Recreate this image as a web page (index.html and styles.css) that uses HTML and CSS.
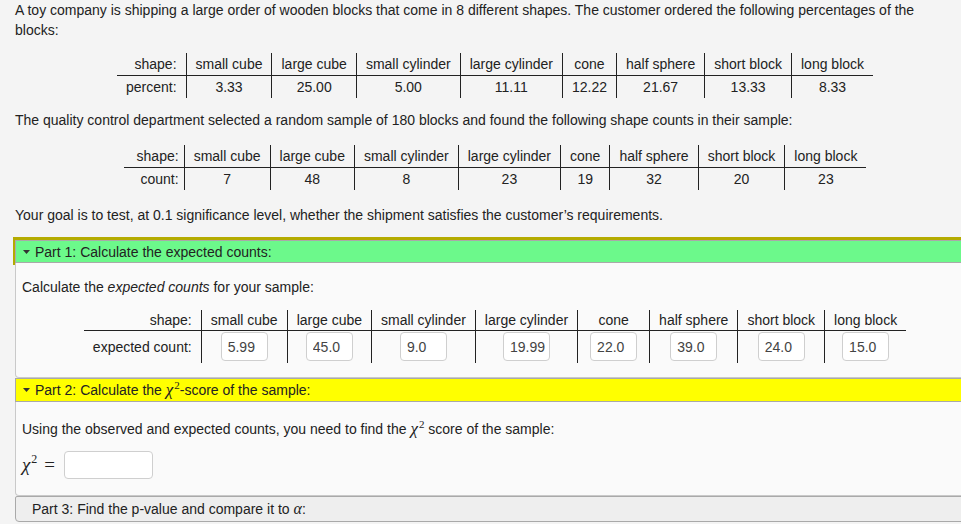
FILE: index.html
```html
<!DOCTYPE html>
<html lang="en">
<head>
<meta charset="utf-8">
<title>Goodness of fit</title>
<link rel="stylesheet" href="styles.css">
</head>
<body>
<div class="page">
  <p class="text intro">A toy company is shipping a large order of wooden blocks that come in 8 different shapes. The customer ordered the following percentages of the blocks:</p>

  <table class="data t1">
    <tr class="head">
      <td class="lab">shape:</td><td>small cube</td><td>large cube</td><td>small cylinder</td><td>large cylinder</td><td>cone</td><td>half sphere</td><td>short block</td><td>long block</td>
    </tr>
    <tr>
      <td class="lab">percent:</td><td>3.33</td><td>25.00</td><td>5.00</td><td>11.11</td><td>12.22</td><td>21.67</td><td>13.33</td><td>8.33</td>
    </tr>
  </table>

  <p class="text q2">The quality control department selected a random sample of 180 blocks and found the following shape counts in their sample:</p>

  <table class="data t2">
    <tr class="head">
      <td class="lab">shape:</td><td>small cube</td><td>large cube</td><td>small cylinder</td><td>large cylinder</td><td>cone</td><td>half sphere</td><td>short block</td><td>long block</td>
    </tr>
    <tr>
      <td class="lab">count:</td><td>7</td><td>48</td><td>8</td><td>23</td><td>19</td><td>32</td><td>20</td><td>23</td>
    </tr>
  </table>

  <p class="text goal">Your goal is to test, at 0.1 significance level, whether the shipment satisfies the customer’s requirements.</p>

  <div class="part part1">
    <div class="part-head head-green">
      <svg class="tri" width="7" height="4" viewBox="0 0 7 4"><polygon points="0,0 7,0 3.5,4" fill="#333"/></svg>
      <span>Part 1: Calculate the expected counts:</span>
    </div>
    <div class="part-body body1">
      <p class="text">Calculate the <em>expected counts</em> for your sample:</p>
      <table class="data t3">
        <tr class="head">
          <td class="lab">shape:</td><td>small cube</td><td>large cube</td><td>small cylinder</td><td>large cylinder</td><td>cone</td><td>half sphere</td><td>short block</td><td>long block</td>
        </tr>
        <tr class="inputs">
          <td class="lab">expected count:</td>
          <td><input class="cell-input" type="text" value="5.99"></td>
          <td><input class="cell-input" type="text" value="45.0"></td>
          <td><input class="cell-input" type="text" value="9.0"></td>
          <td><input class="cell-input" type="text" value="19.99"></td>
          <td><input class="cell-input" type="text" value="22.0"></td>
          <td><input class="cell-input" type="text" value="39.0"></td>
          <td><input class="cell-input" type="text" value="24.0"></td>
          <td><input class="cell-input" type="text" value="15.0"></td>
        </tr>
      </table>
    </div>
  </div>

  <div class="part part2">
    <div class="part-head head-yellow">
      <svg class="tri" width="7" height="4" viewBox="0 0 7 4"><polygon points="0,0 7,0 3.5,4" fill="#333"/></svg>
      <span>Part 2: Calculate the <span class="chi"><i>χ</i><sup>2</sup></span>-score of the sample:</span>
    </div>
    <div class="part-body body2">
      <p class="text">Using the observed and expected counts, you need to find the <span class="chi"><i>χ</i><sup>2</sup></span> score of the sample:</p>
      <div class="chi-row">
        <span class="chi-label"><i>χ</i><sup>2</sup></span>
        <span class="eq">=</span>
        <input class="chi-input" type="text" value="">
      </div>
    </div>
  </div>

  <div class="part part3">
    <div class="part-head head-gray">
      <span>Part 3: Find the p-value and compare it to <i class="alpha">α</i>:</span>
    </div>
  </div>
</div>
</body>
</html>
```

FILE: styles.css
```css
html, body {
  margin: 0;
  padding: 0;
  overflow: hidden;
  background: #f4f4f4;
}

body {
  font-family: "Liberation Sans", Arial, Helvetica, sans-serif;
  font-size: 14px;
  line-height: 20px;
  color: #222;
}

.page {
  width: 960px;
  margin-left: 15px;
}

.text {
  margin: 0;
}

.intro {
  padding-right: 30px;
}

.q2 {
  margin-top: 12px;
}

.goal {
  margin-top: 15px;
}

/* data tables */
.data {
  border-collapse: collapse;
  margin: 13px auto 0;
}

.data td {
  padding: 1px 9px;
  text-align: center;
  border-left: 1px solid #222;
  white-space: nowrap;
}

.data td.lab {
  border-left: none;
  text-align: right;
}

.data tr.head td {
  border-bottom: 1px solid #222;
}

.t2 {
  margin-top: 15px;
}

.t2 td.lab {
  padding-left: 13px;
  padding-right: 5px;
}

.t3 tr.head td {
  padding-top: 0;
  padding-bottom: 0;
}

.t3 tr.inputs td {
  padding-top: 1px;
  padding-bottom: 2px;
}

.cell-input {
  box-sizing: border-box;
  width: 47px;
  height: 29px;
  margin: 0 3px;
  padding: 0 2px 0 6px;
  border: 1px solid #cfcfcf;
  border-radius: 4px;
  background: #fff;
  font-family: "Liberation Sans", Arial, Helvetica, sans-serif;
  font-size: 14px;
  color: #444;
  vertical-align: middle;
}

/* accordion parts */
.part1 {
  margin-top: 15px;
}

.part-head {
  display: flex;
  align-items: center;
  border: 1px solid #a9a9a9;
  color: #222;
}

.head-green {
  height: 21px;
  padding-left: 7px;
  background: #6cf98b;
  box-shadow: 0 0 0 2px #b4ab00, 0 -1px 0 2px #b4ab00;
}

.head-yellow {
  height: 22px;
  padding-left: 7px;
  background: #ffff00;
}

.head-gray {
  height: 24px;
  padding-left: 16px;
  background: #eeeeee;
  border-radius: 2px 0 0 4px;
}

.tri {
  margin-right: 5px;
  flex: none;
}

.part-body {
  background: #fafafa;
  border: 1px solid #c9c9c9;
  border-top: none;
  border-bottom-left-radius: 4px;
  padding: 0 6px;
}

.body1 {
  padding-top: 14px;
  padding-bottom: 14px;
}

.body2 {
  padding-top: 17px;
  padding-bottom: 16px;
}

.chi {
  white-space: nowrap;
}

.chi i {
  font-family: "Liberation Serif", "Times New Roman", serif;
  font-size: 17px;
}

.chi sup {
  font-family: "Liberation Serif", "Times New Roman", serif;
  font-size: 11px;
  line-height: 0;
  vertical-align: 6px;
  margin-left: 1px;
}

.alpha {
  font-family: "Liberation Serif", "Times New Roman", serif;
  font-size: 16px;
}

.chi-row {
  display: flex;
  align-items: center;
  margin-top: 12px;
  height: 28px;
}

.chi-label i {
  font-family: "Liberation Serif", "Times New Roman", serif;
  font-size: 19px;
}

.chi-label sup {
  font-family: "Liberation Serif", "Times New Roman", serif;
  font-size: 12px;
  line-height: 0;
  vertical-align: 8px;
  margin-left: 1px;
}

.eq {
  font-family: "Liberation Serif", "Times New Roman", serif;
  font-size: 19px;
  margin-left: 7px;
  margin-right: 9px;
}

.chi-input {
  box-sizing: border-box;
  width: 89px;
  height: 28px;
  padding: 0 6px;
  border: 1px solid #cfcfcf;
  border-radius: 4px;
  background: #fff;
  font-family: "Liberation Sans", Arial, Helvetica, sans-serif;
  font-size: 14px;
}
```
